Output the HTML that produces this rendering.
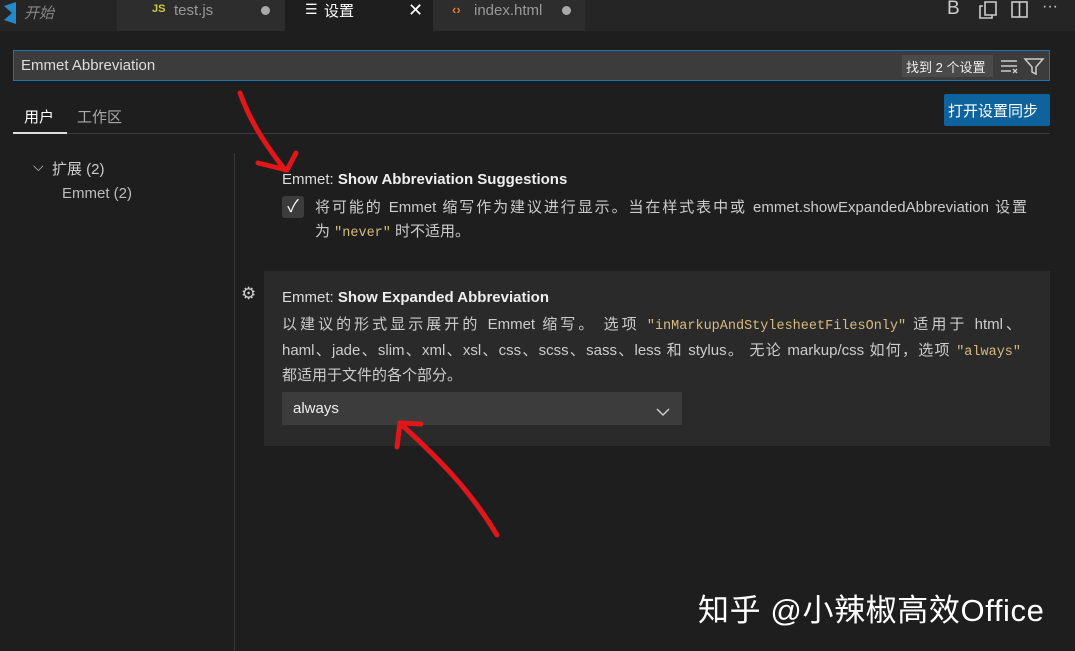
<!DOCTYPE html>
<html><head><meta charset="utf-8"><style>
*{margin:0;padding:0;box-sizing:border-box}
body{width:1075px;height:651px;background:#1e1e1e;font-family:"Liberation Sans","Noto Sans CJK SC",sans-serif;color:#ccc;position:relative;overflow:hidden;font-size:14px}
.abs{position:absolute}
.mono{font-family:"Liberation Mono","Noto Sans CJK SC",monospace;color:#d7ba7d;font-size:13.5px}
.nw{white-space:nowrap}
.j{white-space:nowrap;text-align:justify;text-align-last:justify;display:block}
</style></head><body>
<div class="abs" style="left:0;top:0;width:1075px;height:31px;background:#252526"></div>
<div class="abs" style="left:0;top:2px;width:18px;height:20px;"><svg width="18" height="22"><path d="M4 4 L16 0 L16 22 L4 18 L12 11 Z" fill="#2489ca"/></svg></div>
<div class="abs" style="left:24px;top:2px;font-style:italic;color:#888;font-size:15px">开始</div>
<div class="abs" style="left:117px;top:0;width:168px;height:31px;background:#2d2d2d"></div>
<div class="abs" style="left:152px;top:3px;color:#cbcb41;font-size:11px;font-weight:bold">JS</div>
<div class="abs" style="left:174px;top:2px;color:#999;font-size:15px">test.js</div>
<div class="abs" style="left:261px;top:6px;width:9px;height:9px;border-radius:50%;background:#aaa"></div>
<div class="abs" style="left:285px;top:0;width:148px;height:31px;background:#1e1e1e"></div>
<div class="abs" style="left:305px;top:1px;color:#fff;font-size:14px">☰</div>
<div class="abs" style="left:324px;top:0px;color:#fff;font-size:15px">设置</div>
<div class="abs" style="left:408px;top:0px;color:#fff;font-size:18px">✕</div>
<div class="abs" style="left:433px;top:0;width:152px;height:31px;background:#2d2d2d"></div>
<div class="abs" style="left:452px;top:2px;color:#e37933;font-size:13px;font-weight:bold">‹›</div>
<div class="abs" style="left:474px;top:2px;color:#999;font-size:15px">index.html</div>
<div class="abs" style="left:562px;top:6px;width:9px;height:9px;border-radius:50%;background:#aaa"></div>
<div class="abs" style="left:947px;top:-2px;color:#ccc;font-size:19px">B</div>
<div class="abs" style="left:978px;top:0"><svg width="20" height="20"><path d="M5 6 H2 V18 H14 V15 M7 2 H18 V15 H7 Z" stroke="#ccc" stroke-width="1.6" fill="none"/></svg></div>
<div class="abs" style="left:1010px;top:0"><svg width="20" height="20"><rect x="2" y="2" width="15" height="15" stroke="#ccc" stroke-width="1.6" fill="none"/><path d="M9.5 2V17" stroke="#ccc" stroke-width="1.6"/></svg></div>
<div class="abs" style="left:1042px;top:-2px;color:#ccc;font-size:16px">···</div>

<div class="abs" style="left:13px;top:50px;width:1037px;height:31px;background:#3c3c3c;border:1px solid #1b74b5"></div>
<div class="abs" style="left:21px;top:57px;color:#ddd;font-size:15px">Emmet Abbreviation</div>
<div class="abs" style="left:902px;top:55px;width:91px;height:22px;background:#4a4a4a;color:#eee;font-size:13px;padding:2px 4px">找到 2 个设置</div>
<div class="abs" style="left:999px;top:57px"><svg width="48" height="20"><path d="M2 4H18M2 9H18M2 14H12M14 12l4 4M18 12l-4 4" stroke="#ccc" stroke-width="1.4"/><path d="M26 2H44L37 10V17L33 15V10Z" stroke="#ccc" stroke-width="1.5" fill="none"/></svg></div>

<div class="abs" style="left:24px;top:106px;color:#fff;font-size:15px">用户</div>
<div class="abs" style="left:77px;top:106px;color:#aaa;font-size:15px">工作区</div>
<div class="abs" style="left:13px;top:133px;width:1037px;height:1px;background:#3a3a3a"></div>
<div class="abs" style="left:13px;top:132px;width:54px;height:2px;background:#ddd"></div>
<div class="abs" style="left:944px;top:94px;width:106px;height:32px;background:#0e639c;color:#fff;font-size:15px;padding:6px 4px;border-radius:2px">打开设置同步</div>

<div class="abs" style="left:33px;top:158px;color:#ccc;font-size:14px">⌵</div>
<div class="abs" style="left:52px;top:158px;color:#ccc;font-size:15px">扩展 (2)</div>
<div class="abs" style="left:62px;top:185px;color:#bbb;font-size:15px">Emmet (2)</div>
<div class="abs" style="left:234px;top:153px;width:1px;height:498px;background:#3a3a3a"></div>

<div class="abs nw" style="left:282px;top:171px;color:#ddd;font-size:15px">Emmet: <b style="color:#eee">Show Abbreviation Suggestions</b></div>
<div class="abs" style="left:282px;top:196px;width:22px;height:22px;background:#3c3c3c;border-radius:3px;color:#fff;text-align:center;font-size:17px;line-height:22px">✓</div>
<div class="abs" style="left:315px;top:196px;width:712px;line-height:24px;font-size:15px;color:#ccc">
<span class="j">将可能的 Emmet 缩写作为建议进行显示。当在样式表中或 emmet.showExpandedAbbreviation 设置</span>
<span style="white-space:nowrap">为 <span class="mono">"never"</span> 时不适用。</span></div>

<div class="abs" style="left:264px;top:271px;width:786px;height:175px;background:#2a2a2b"></div>
<div class="abs" style="left:241px;top:284px;color:#ccc;font-size:17px">⚙</div>
<div class="abs nw" style="left:282px;top:289px;color:#ddd;font-size:15px">Emmet: <b style="color:#eee">Show Expanded Abbreviation</b></div>
<div class="abs" style="left:282px;top:313px;width:739px;line-height:23.5px;font-size:15px;color:#ccc">
<span class="j" style="width:739px">以建议的形式显示展开的 Emmet 缩写。 选项 <span class="mono">"inMarkupAndStylesheetFilesOnly"</span> 适用于 html、</span>
<span class="j" style="width:739px">haml、jade、slim、xml、xsl、css、scss、sass、less 和 stylus。 无论 markup/css 如何，选项 <span class="mono">"always"</span></span>
<span style="white-space:nowrap">都适用于文件的各个部分。</span></div>
<div class="abs" style="left:282px;top:392px;width:400px;height:33px;background:#3c3c3c"></div>
<div class="abs" style="left:293px;top:400px;color:#eee;font-size:15px">always</div>
<div class="abs" style="left:656px;top:404px"><svg width="14" height="10"><path d="M1 2L7 8L13 2" stroke="#ccc" stroke-width="1.5" fill="none"/></svg></div>

<svg class="abs" style="left:0;top:0" width="1075" height="651">
<path d="M240 93 C250 120 262 140 285 170" stroke="#e0161a" stroke-width="5" fill="none" stroke-linecap="round"/>
<path d="M258 163 L287 170 L296 153" stroke="#e0161a" stroke-width="5" fill="none" stroke-linecap="round" stroke-linejoin="round"/>
<path d="M497 535 C470 490 440 460 402 425" stroke="#e0161a" stroke-width="5" fill="none" stroke-linecap="round"/>
<path d="M397 447 L400 423 L421 424" stroke="#e0161a" stroke-width="5" fill="none" stroke-linecap="round" stroke-linejoin="round"/>
</svg>
<div class="abs nw" style="left:698px;top:585px;color:#fff;font-size:31px;letter-spacing:0.6px">知乎 @小辣椒高效Office</div>
</body></html>
